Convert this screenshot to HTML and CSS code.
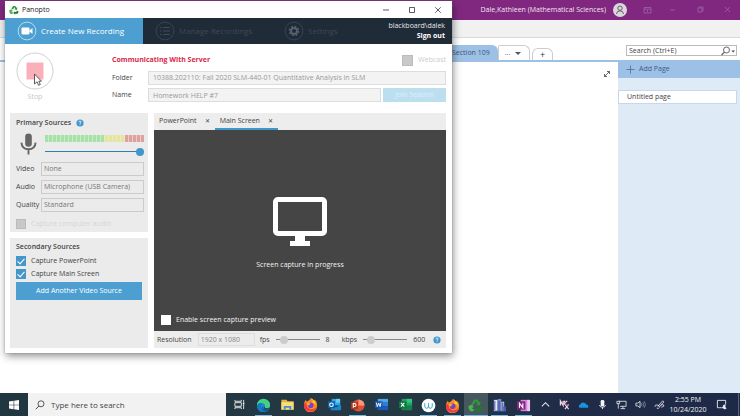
FILE: index.html
```html
<!DOCTYPE html>
<html lang="en">
<head>
<meta charset="utf-8">
<title>Desktop</title>
<link rel="stylesheet" href="styles.css">
</head>
<body>
<svg class="defs" aria-hidden="true">
  <symbol id="help" viewBox="0 0 8 8"><circle cx="4" cy="4" r="3.6" fill="#3f97cc"/><path d="M2.9 3.2Q3 2 4 2t1.1 1Q5.100 3.600 4 4.200V4.800M4 5.400V6.200" fill="none" stroke="#fff" stroke-width=".8"/></symbol>
  <symbol id="firefox" viewBox="0 0 16 16"><path d="M8.500 1Q11 2 11.500 4Q12.500 3.500 12.600 2.600Q15.500 5.500 15 9.500A7 7 0 0 1 1 9Q1 5 3 3L4 5Q7 4 8.500 1z" fill="#ff8a1c"/><path d="M1 8A7 7 0 0 0 14.500 11Q10 15 6 12Q3 10 4 6Q2 6 1 8z" fill="#f4364c"/><path d="M9 1Q13 4 14 8Q12 6 10 6Q11 4 9 1z" fill="#ffd43a"/><circle cx="8.200" cy="8.800" r="3" fill="#7b3fd0"/><path d="M4 7Q6 5.500 8.500 7.200Q6.500 7.500 6.500 9Q4 9 4 7z" fill="#ffb02e"/></symbol>
  <symbol id="recycle" viewBox="0 0 16 16"><g fill="#2f9a3b"><path d="M4 6L6.500 1.500H10L12 4.500L13.500 3.800L12.500 8L8.500 6.600L10 5.700L8.400 3.500L6.500 7z"/><path d="M12.200 8.600L15.500 10.200L13.800 14H9.800V15.500L6.800 12.500L9.800 9.800V11.300H12z" fill="#1f7a2c"/><path d="M.5 8.500L4.800 6.600L6 10.500L4.700 10L4.200 11.500L6.300 11.700L6 14.200H2.500L.6 11z" fill="#4ab54f"/></g></symbol>
</svg>
<div class="desktop">
  <div class="notebook">
    <header class="nb-title">
      <span>Dale,Kathleen (Mathematical Sciences)</span>
      <svg class="avatar" viewBox="0 0 14 14"><circle cx="7" cy="7" r="7" fill="#dcd6dd"/><circle cx="7" cy="5.200" r="2.200" fill="none" stroke="#665b68"/><path d="M3.500 11Q3.800 7.800 7 7.800T10.500 11" fill="none" stroke="#665b68"/></svg>
      <svg class="nb-controls" viewBox="0 0 94 10"><g fill="none" stroke="#a063a2" stroke-width=".8"><path d="M1 2.500H8V8H1zM1 4.200H8M4.500 7V5M27 5H32M55 3H59V7H55zM56 3V2H60V6H59M82 2L87 7M87 2L82 7"/></g></svg>
    </header>
    <div class="ribbon"></div>
    <div class="tabs-row">
      <nav class="sections">
        <a class="section" href="#">Section 109</a>
        <a class="section more" href="#">... <i class="down"></i></a>
        <a class="section plus" href="#">+</a>
      </nav>
      <label class="search">
        <input type="text" placeholder="Search (Ctrl+E)" aria-label="Search notebooks">
        <svg viewBox="0 0 16 10"><circle cx="6.500" cy="4" r="3" fill="none" stroke="#555" stroke-width=".9"/><path d="M4.500 6.200L1.500 9" stroke="#555" stroke-width="1.100"/><path d="M11.500 4.500H15L13.250 6.500z" fill="#444"/></svg>
      </label>
    </div>
    <div class="nb-body">
      <main class="page"><svg class="expand" viewBox="0 0 8 8"><path d="M1.500 6.500L6.500 1.500M4 1.500H6.500V4M1.500 4V6.500H4" fill="none" stroke="#555" stroke-width=".9"/></svg></main>
      <aside class="pages">
        <button class="add-page"><svg viewBox="0 0 10 10"><path d="M5 .5V9.500M.5 5H9.500" stroke="#4f6e90" stroke-width=".9"/></svg>Add Page</button>
        <a class="page-link" href="#">Untitled page</a>
      </aside>
    </div>
  </div>

  <footer class="taskbar">
    <button class="start" aria-label="Start"><svg viewBox="0 0 10 10"><path d="M0 1.400L4.600.8V4.700H0zM5.200.7L10 0V4.700H5.200zM0 5.300H4.600V9.200L0 8.600zM5.200 5.300H10V10L5.200 9.300z" fill="#fff"/></svg></button>
    <label class="task-search">
      <svg viewBox="0 0 10 10"><circle cx="6" cy="3.800" r="3" fill="none" stroke="#333" stroke-width=".8"/><path d="M3.900 6L.8 9.200" stroke="#333" stroke-width=".9"/></svg>
      <input type="text" placeholder="Type here to search" aria-label="Search the computer">
    </label>
    <div class="apps">
      <button aria-label="Task view"><svg class="small" viewBox="0 0 12 12"><path d="M1 1V2.500H8V1M1 11V9.500H8V11M1 4H8V8H1zM10.500 1V4M10.500 6V11" fill="none" stroke="#e8edf0"/><path d="M9.700 4H11.300V6H9.700z" fill="#fff"/></svg></button>
      <button class="open" aria-label="Edge"><svg viewBox="0 0 16 16"><circle cx="8" cy="8" r="7" fill="#168bd2"/><path d="M1 8A7 7 0 0 1 15 7.500Q15 11 11 11Q9 11 9.500 9Q10 6 7 5.500Q3 5 1 8z" fill="#45cf80"/><path d="M1 8Q3 5 7 5.500Q5 7 5.500 10Q6.500 14 11.500 14Q4 17 1.500 11z" fill="#1478c4"/><path d="M7.500 7.500Q6 9 7.500 11Q9.500 13.300 13.500 12Q11 15 8 13.500Q5 11 7.500 7.500z" fill="#12529d"/><path d="M9.500 9Q9 11 11 11Q12.500 11 14 10.300L13 12.300Q9 13 8 10z" fill="#263d48"/></svg></button>
      <button aria-label="Files"><svg viewBox="0 0 16 16"><path d="M1.500 3H7L8 4.500H14.500V13.500H1.500z" fill="#e6b23c"/><path d="M1.500 5.500H14.500V13.500H1.500z" fill="#fbdc79"/><path d="M4 13.500V9.500H12V13.500H10V11.500H6V13.500z" fill="#3f94ce"/></svg></button>
      <button aria-label="Firefox"><svg viewBox="0 0 16 16"><use href="#firefox"/></svg></button>
      <button aria-label="Outlook"><svg viewBox="0 0 16 16"><path d="M5 2H14V9H5z" fill="#34a8e8"/><path d="M9.500 2H14V6H9.500z" fill="#62cef7"/><path d="M4 8L9.500 11L15 8V14H4z" fill="#1688d2"/><path d="M1 4.500H8.500V12H1z" fill="#0b5fad"/><circle cx="4.750" cy="8.250" r="1.900" fill="none" stroke="#fff" stroke-width="1.100"/></svg></button>
      <button class="open" aria-label="PowerPoint"><svg viewBox="0 0 16 16"><circle cx="9" cy="8" r="6.500" fill="#db5034"/><path d="M9 1.500A6.500 6.500 0 0 1 15.500 8H9z" fill="#ff967c"/><path d="M1 4.500H8.500V12H1z" fill="#b6321b"/><path d="M3.500 10.500V6H5Q6.500 6 6.500 7.500T5 9H3.500" fill="none" stroke="#fff" stroke-width="1.100"/></svg></button>
      <button aria-label="Word"><svg viewBox="0 0 16 16"><path d="M4 2H15V6H4z" fill="#4ca7ef"/><path d="M4 6H15V10H4z" fill="#2e7dd6"/><path d="M4 10H15V14H4z" fill="#1b5abe"/><path d="M1 4.500H9V12H1z" fill="#1a53ad"/><path d="M2.500 6L3.500 10.300L5 6.500L6.500 10.300L7.500 6" fill="none" stroke="#fff"/></svg></button>
      <button aria-label="Excel"><svg viewBox="0 0 16 16"><path d="M4 2H15V14H4z" fill="#20a566"/><path d="M9.500 2H15V6H9.500z" fill="#35c481"/><path d="M4 9H15V14H4z" fill="#14804a"/><path d="M1 4.500H9V12H1z" fill="#0f7440"/><path d="M3.200 6.200L6.800 10.300M6.800 6.200L3.200 10.300" stroke="#fff" stroke-width="1.100"/></svg></button>
      <button class="open" aria-label="WPS"><svg viewBox="0 0 16 16"><circle cx="8" cy="8" r="7.300" fill="#fff"/><path d="M4 5.500V8.500Q4 11 6 11T8 8.500V5.500M8 8.500Q8 11 10 11T12 8.500V5.500" fill="none" stroke="#2fa5c9" stroke-width="1"/></svg></button>
      <button class="open" aria-label="Firefox window"><svg viewBox="0 0 16 16"><use href="#firefox"/></svg></button>
      <button class="open current" aria-label="Panopto"><svg viewBox="0 0 16 16"><use href="#recycle"/></svg></button>
      <button class="open" aria-label="Library"><svg viewBox="0 0 16 16"><path d="M2 2H6V14H2z" fill="#e4e6f5"/><path d="M6 1H10V14H6z" fill="#6f86cf"/><path d="M10 4H13V14H10z" fill="#c1cbed"/><path d="M3 3V13M7.500 3V13M11.500 5V13M1 14H15" stroke="#3445a0"/><path d="M12 9H15V14H12z" fill="#4d5dac"/></svg></button>
      <button class="open" aria-label="OneNote"><svg viewBox="0 0 16 16"><path d="M5 2H14V14H5z" fill="#d886dc"/><path d="M12 2H15V14H12z" fill="#f0c4f1"/><path d="M1 3.500H10V12.500H1z" fill="#80257e"/><path d="M3.700 10.500V5.500L7.300 10.500V5.500" fill="none" stroke="#fff" stroke-width="1.200"/></svg></button>
    </div>
    <div class="tray">
      <svg viewBox="0 0 12 12"><path d="M2 8L6 4L10 8" fill="none" stroke="#e7e9ee" stroke-width="1.100"/></svg>
      <svg viewBox="0 0 12 12"><path d="M1.500 7V2L4.500 7V2M6 2V6M9 2L6 4.500M6.500 6L10.500 11M10.500 6L6.500 11" fill="none" stroke="#f2dbe6" stroke-width="1.300"/><path d="M6 4L10 7" stroke="#d8437d"/></svg>
      <svg viewBox="0 0 12 12"><path d="M1.500 9.500Q0 7 2.500 6Q3.500 3 6.500 4Q8.500 4 9 6Q12 6.500 11 9.500z" fill="#1594df"/></svg>
      <svg viewBox="0 0 12 12"><rect x="4" y="1" width="4" height="7" rx="1.500" fill="#f2f4f8"/><path d="M2.800 6.500Q3 9 6 9T9.200 6.500M6 9V11" fill="none" stroke="#f2f4f8"/></svg>
      <svg viewBox="0 0 12 12"><path d="M3 2.500H11V8H4.500M7.500 8V10.500M5 10.500H10M1 2.500H4V5H1zM2.500 5V10.500" fill="none" stroke="#e7e9ee" stroke-width=".9"/></svg>
      <svg viewBox="0 0 12 12"><path d="M1 4.500H3L5.500 2.500V9.500L3 7.500H1z" fill="none" stroke="#e7e9ee" stroke-width=".9"/><path d="M7 4.500Q8 6 7 7.500M8.600 3.500Q10.200 6 8.600 8.500M10.200 2.500Q12.500 6 10.200 9.500" fill="none" stroke="#9299a9" stroke-width=".8"/></svg>
      <svg viewBox="0 0 12 12"><path d="M1 8.500Q1 6 3.500 6.500T6 9Q5 11 3 10M4 8L9.500 2L10.800 3.200L5.500 8.500M7 7.500Q9 5 10.500 6.500T8 9" fill="none" stroke="#e7e9ee" stroke-width=".9"/></svg>
    </div>
    <time class="clock"><span>2:55 PM</span><span>10/24/2020</span></time>
    <button class="notify" aria-label="Notifications"><svg viewBox="0 0 12 12"><path d="M8 9.500H6L4 9.500L1.500 9.500V1.500H10.500V6" fill="none" stroke="#e7e9ee"/><path d="M10.800 6.500A2.400 2.400 0 1 0 11.500 10A2.200 2.200 0 0 1 10.800 6.500z" fill="#e7e9ee"/></svg></button>
  </footer>

  <section class="window">
    <header class="win-title">
      <svg class="logo" viewBox="0 0 16 16"><use href="#recycle"/></svg>
      <span>Panopto</span>
      <button aria-label="Minimize"><svg viewBox="0 0 8 8"><path d="M1 4H7" stroke="#333" stroke-width=".8"/></svg></button>
      <button aria-label="Maximize"><svg viewBox="0 0 8 8"><path d="M1.500 1.500H6.500V6.500H1.500z" fill="none" stroke="#333" stroke-width=".8"/></svg></button>
      <button aria-label="Close"><svg viewBox="0 0 8 8"><path d="M1.300 1.300L6.700 6.700M6.700 1.300L1.300 6.700" stroke="#333" stroke-width=".8"/></svg></button>
    </header>
    <nav class="main-nav">
      <a class="active" href="#"><svg viewBox="0 0 20 20"><circle cx="10" cy="10" r="8.900" fill="none" stroke="#b9dcf0"/><rect x="4.500" y="6.500" width="8" height="7" rx="1" fill="#fff"/><path d="M12 10L15.500 7V13z" fill="#fff"/></svg>Create New Recording</a>
      <a class="manage" href="#"><svg viewBox="0 0 20 20"><circle cx="10" cy="10" r="8.900" fill="none" stroke="#364451"/><path d="M8 6.500H15M8 10H15M8 13.500H15M5 6.500H6.500M5 10H6.500M5 13.500H6.500" stroke="#3d4a57"/></svg>Manage Recordings</a>
      <a class="settings" href="#"><svg viewBox="0 0 20 20"><circle cx="10" cy="10" r="8.900" fill="none" stroke="#364451"/><circle cx="10" cy="10" r="3" fill="none" stroke="#56616d" stroke-width="2"/><circle cx="10" cy="10" r="4.600" fill="none" stroke="#56616d" stroke-width="1.500" stroke-dasharray="1.800 1.810"/></svg>Settings</a>
      <div class="account"><span>blackboard\dalek</span><a href="#">Sign out</a></div>
    </nav>
    <div class="session">
      <button class="stop" disabled>
        <svg viewBox="0 0 38 38"><circle cx="19" cy="19" r="18" fill="#fff" stroke="#d3cfd1"/><path d="M10.500 10.500H27.500V27.500H10.500z" fill="#fab0b9"/><path d="M18.500 22V32L21 29.800L22.600 33.300L24.300 32.500L22.800 29.200H25.500z" fill="#fff" stroke="#333" stroke-width=".8"/></svg>
        <span>Stop</span>
      </button>
      <form class="details">
        <div class="status"><strong>Communicating With Server</strong><label class="webcast"><input type="checkbox" disabled>Webcast</label></div>
        <label for="folder">Folder</label>
        <select id="folder" disabled><option>10388.202110: Fall 2020 SLM-440-01 Quantitative Analysis in SLM</option></select>
        <label for="name">Name</label>
        <div class="name-row"><input id="name" type="text" value="Homework HELP #7" disabled><button class="join" type="button" disabled>Join Session</button></div>
      </form>
    </div>
    <div class="workspace">
      <div class="sources">
        <section class="panel primary">
          <h2>Primary Sources <svg class="help" viewBox="0 0 8 8"><use href="#help"/></svg></h2>
          <div class="audio">
            <svg class="mic" viewBox="0 0 18 24"><rect x="5.500" y="1" width="7" height="14" rx="3.500" fill="#666"/><path d="M1.500 10.500Q2 17.500 9 17.500T16.500 10.500M9 17.500V23" fill="none" stroke="#666" stroke-width="2"/></svg>
            <div class="levels"><div class="meter"></div><input class="volume" type="range" value="100" aria-label="Volume"></div>
          </div>
          <div class="fields">
            <label for="video">Video</label><select id="video"><option>None</option></select>
            <label for="audio">Audio</label><select id="audio"><option>Microphone (USB Camera)</option></select>
            <label for="quality">Quality</label><select id="quality"><option>Standard</option></select>
          </div>
          <label class="check faint"><input type="checkbox" disabled>Capture computer audio</label>
        </section>
        <section class="panel secondary">
          <h2>Secondary Sources</h2>
          <label class="check"><input type="checkbox" checked>Capture PowerPoint</label>
          <label class="check"><input type="checkbox" checked>Capture Main Screen</label>
          <button class="add-source">Add Another Video Source</button>
        </section>
      </div>
      <section class="viewer">
        <div class="view-tabs">
          <button>PowerPoint <span>✕</span></button>
          <button class="selected">Main Screen <span>✕</span></button>
        </div>
        <div class="preview">
          <div class="message">
            <svg viewBox="0 0 54 50"><rect x="2.500" y="2.500" width="49" height="34" rx="2.500" fill="none" stroke="#fff" stroke-width="5"/><path d="M22 38H32V44H37V49H17V44H22z" fill="#fff"/></svg>
            <p>Screen capture in progress</p>
          </div>
          <label class="check"><input type="checkbox">Enable screen capture preview</label>
        </div>
        <div class="quality-bar">
          <label for="resolution">Resolution</label>
          <select id="resolution"><option>1920 x 1080</option></select>
          <label for="fps">fps</label><input id="fps" type="range" value="12"><output>8</output>
          <label for="kbps">kbps</label><input id="kbps" type="range" value="10"><output>600</output>
          <svg class="help" viewBox="0 0 8 8"><use href="#help"/></svg>
        </div>
      </section>
    </div>
  </section>
</div>
</body>
</html>
```
FILE: styles.css
```css
* { box-sizing: border-box; }
body { margin: 0; font: 7px/10px "Open Sans", "Noto Sans", sans-serif; color: #444; }
button, input, select { font: inherit; color: inherit; border: 0; border-radius: 0; padding: 0; margin: 0; background: none; min-width: 0; }
select, input { appearance: none; outline: 0; }
a { color: inherit; text-decoration: none; }
svg { display: block; flex: none; }
.defs { position: absolute; width: 0; height: 0; }
.desktop { min-height: 100vh; display: flex; flex-direction: column; position: relative; overflow: hidden; }

.notebook { flex: 1; display: flex; flex-direction: column; }
.nb-title { height: 20px; background: #80287f; color: #f2e5f2; display: flex; align-items: center; justify-content: flex-end; }
.avatar { width: 14px; height: 14px; margin-left: 7px; }
.nb-controls { width: 94px; height: 10px; margin-left: 16px; margin-right: 3px; }
.ribbon { height: 18px; background: #f2f1f1; border-bottom: 1px solid #d9d9d9; }
.tabs-row { height: 22px; display: flex; align-items: flex-end; background: #fff; }
.sections { flex: 1; display: flex; align-items: flex-end; padding-left: 440px; }
.section { height: 15px; line-height: 15px; padding: 0 8px 0 12px; background: #9dc1e6; color: #3d5570; border-radius: 2px 6px 0 0; }
.section.more { background: #fff; color: #555; border: 1px solid #ccc; border-bottom: 0; padding: 0 8px 0 6px; line-height: 14px; }
.section.plus { background: #fff; color: #333; border: 1px solid #ccc; border-bottom: 0; border-radius: 6px 6px 0 0; height: 12px; line-height: 11px; padding: 0 7px; margin-left: 2px; font-size: 9px; }
.down { display: inline-block; border: 3px solid transparent; border-top-color: #555; border-bottom: 0; margin-left: 3px; }
.search { width: 111px; height: 11px; margin: 0 3px 4px 0; border: 1px solid #bbb; display: flex; align-items: center; background: #fff; }
.search input { flex: 1; padding-left: 2px; }
.search svg { width: 16px; height: 10px; }
input::placeholder { color: #444; opacity: 1; }
.nb-body { flex: 1; display: flex; border-top: 2px solid #9dc1e6; }
.page { flex: 1; background: #fff; display: flex; justify-content: flex-end; padding: 8px 7px; }
.expand { width: 8px; height: 8px; }
.pages { width: 122px; background: #dfeaf7; display: flex; flex-direction: column; }
.add-page { height: 16px; background: #9dc1e6; display: flex; align-items: center; gap: 4px; padding: 0 8px 2px; color: #3d5a7c; }
.add-page svg { width: 9px; height: 9px; }
.page-link { height: 14px; line-height: 12px; margin: 12px 3px 0 0; padding-left: 8px; background: #fff; border: 1px solid #c8d8ea; }

.taskbar { height: 23px; background: linear-gradient(90deg, #203640 0, #243943 55%, #202b48 78%, #1d2946 100%); display: flex; align-items: stretch; color: #eef0f4; }
.start { width: 28px; display: grid; place-items: center; }
.start svg { width: 10px; height: 10px; }
.task-search { width: 198px; background: #f2f2f2; display: flex; align-items: center; gap: 6px; padding-left: 7px; color: #444; }
.task-search svg { width: 10px; height: 10px; }
.task-search input { flex: 1; font-size: 8px; }
.apps { flex: 1; display: grid; grid-template-columns: repeat(13, 1fr); padding: 0 1px 0 2px; }
.apps button { display: flex; flex-direction: column; align-items: center; justify-content: center; }
.apps .open::after { content: ""; width: 17px; height: 2px; margin-bottom: -3px; background: #75b7e4; }
.apps .current { background: #46575d; }
.apps .current::after { width: 100%; }
.apps svg { width: 15px; height: 15px; margin: 2px 0; }
.apps .small { width: 11px; height: 11px; }
.tray { width: 133px; display: grid; grid-template-columns: repeat(7, 1fr); place-items: center; }
.tray svg { width: 11px; height: 11px; }
.clock { width: 38px; display: flex; flex-direction: column; justify-content: center; align-items: center; white-space: nowrap; }
.notify { width: 32px; display: grid; place-items: center; border-right: 1px solid #56617a; margin-right: 1px; padding-right: 2px; }
.notify svg { width: 11px; height: 11px; }

.window { position: absolute; left: 5px; top: 1px; width: 447px; background: #fff; box-shadow: 0 0 1px #777, 1px 3px 8px rgba(0, 0, 0, .45); }
.win-title { height: 17px; display: flex; align-items: center; padding-right: 1px; color: #222; }
.logo { width: 10px; height: 10px; margin: 0 3px 0 4px; }
.win-title span { flex: 1; }
.win-title button { width: 26px; display: grid; place-items: center; }
.win-title button svg { width: 8px; height: 8px; }
.main-nav { height: 26px; display: flex; background: #202b38; color: #3e4853; font-size: 8px; }
.main-nav > a { display: flex; align-items: center; gap: 4px; }
.main-nav > a svg { width: 20px; height: 20px; }
.main-nav .active { width: 138px; padding-left: 12px; background: #4d9fd2; color: #fff; }
.main-nav .manage { width: 129px; padding-left: 12px; }
.main-nav .settings { padding-left: 12px; }
.account { margin-left: auto; padding-right: 7px; display: flex; flex-direction: column; justify-content: center; text-align: right; color: #e4e7eb; font-size: 7px; }
.account a { font-weight: 700; color: #fff; }
.session { display: flex; height: 69px; padding: 8px 6px 0 11px; }
.stop { width: 38px; display: flex; flex-direction: column; align-items: center; justify-content: flex-start; color: #c6c6c6; }
.stop svg { width: 38px; height: 38px; margin-bottom: 2px; }
.details { flex: 1; margin-left: 58px; display: grid; grid-template-columns: 36px 1fr; grid-template-rows: 16px 14px 14px; row-gap: 3px; align-items: center; align-content: start; }
.status { grid-column: 1 / -1; display: flex; justify-content: space-between; align-items: center; }
.status strong { color: #dc2748; }
.webcast { display: flex; align-items: center; gap: 5px; color: #ccc; }
.webcast input { width: 11px; height: 11px; background: #c9c9c9; border: 1px solid #bbb; }
.details select, .name-row input { height: 14px; border: 1px solid #ddd; background: #f3f3f3; color: #999; opacity: 1; padding: 0 4px; width: 100%; }
.name-row { display: flex; gap: 2px; }
.name-row input { flex: 1; }
.join { width: 63px; background: #bcdff0; color: #dceff8; }

.workspace { display: flex; gap: 6px; padding: 0 6px 5px 5px; }
.sources { width: 138px; display: flex; flex-direction: column; gap: 6px; }
.panel { background: #ebebeb; padding: 5px 4px 2px 6px; }
.secondary { flex: 1; padding-top: 4px; }
h2 { font-size: 7px; line-height: 10px; font-weight: 600; margin: 0; display: flex; align-items: center; gap: 5px; }
.secondary h2 { margin-bottom: 2px; }
.help { width: 8px; height: 8px; }
.audio { display: flex; gap: 8px; margin-top: 4px; padding-left: 4px; height: 29px; }
.mic { width: 17px; height: 24px; }
.levels { flex: 1; }
.meter { height: 7px; margin-top: 3px; background: repeating-linear-gradient(90deg, transparent 0 3px, #ebebeb99 3px 4px), linear-gradient(90deg, #a5e2a5 0 60%, #e5e5a0 60% 81%, #dfa0a0 81%); }
.volume { width: 100%; height: 9px; margin-top: 5px; display: block; background: linear-gradient(#347fae, #347fae) center / 100% 1px no-repeat; }
.volume::-webkit-slider-thumb { appearance: none; width: 8px; height: 8px; border-radius: 50%; background: #4196ca; }
.fields { display: grid; grid-template-columns: 25px 1fr; row-gap: 4px; align-items: center; margin-top: 1px; }
.fields select { height: 14px; border: 1px solid #cbcbcb; padding: 0 2px; color: #777; }
.check { display: flex; align-items: center; gap: 5px; height: 13px; }
.check input { width: 10px; height: 10px; flex: none; background: #fff; }
.secondary .check input:checked { background: #4597ca; display: grid; place-items: center; }
.secondary .check input:checked::before { content: ""; width: 3px; height: 6px; border: solid #fff; border-width: 0 1px 1px 0; transform: rotate(42deg); }
.faint { color: #d6d6d6; margin-top: 5px; }
.check.faint input { background: #c8c8c8; border: 1px solid #bbb; }
.add-source { width: 126px; height: 18px; margin-top: 2px; background: #4d9fd2; color: #fff; display: block; }
.viewer { flex: 1; min-width: 0; display: flex; flex-direction: column; }
.view-tabs { height: 17px; background: #ededed; display: flex; }
.view-tabs button { padding: 0 5px 0 5px; border-bottom: 2px solid transparent; display: flex; align-items: center; gap: 8px; }
.view-tabs span { font-size: 6px; }
.view-tabs .selected { border-bottom-color: #3f97cc; }
.preview { height: 201px; background: #454545; color: #f3f3f3; display: flex; flex-direction: column; justify-content: space-between; padding: 67px 7px 5px; }
.message { display: flex; flex-direction: column; align-items: center; }
.message svg { width: 54px; height: 50px; }
.message p { margin: 13px 0 0; }
.quality-bar { height: 17px; background: #ececec; display: flex; align-items: center; padding: 0 5px 0 3px; }
.quality-bar select { width: 57px; height: 13px; margin: 0 5px 0 6px; padding: 0 2px; border: 1px solid #ddd; color: #888; }
.quality-bar input { width: 44px; height: 9px; margin: 0 6px; background: linear-gradient(#888, #888) center / 100% 1px no-repeat; }
.quality-bar input::-webkit-slider-thumb { appearance: none; width: 8px; height: 8px; border-radius: 50%; background: #ccc; }
.quality-bar output { margin-right: 12px; }
.quality-bar .help { margin-left: auto; }
.quality-bar output:last-of-type { margin-right: 0; }
```
